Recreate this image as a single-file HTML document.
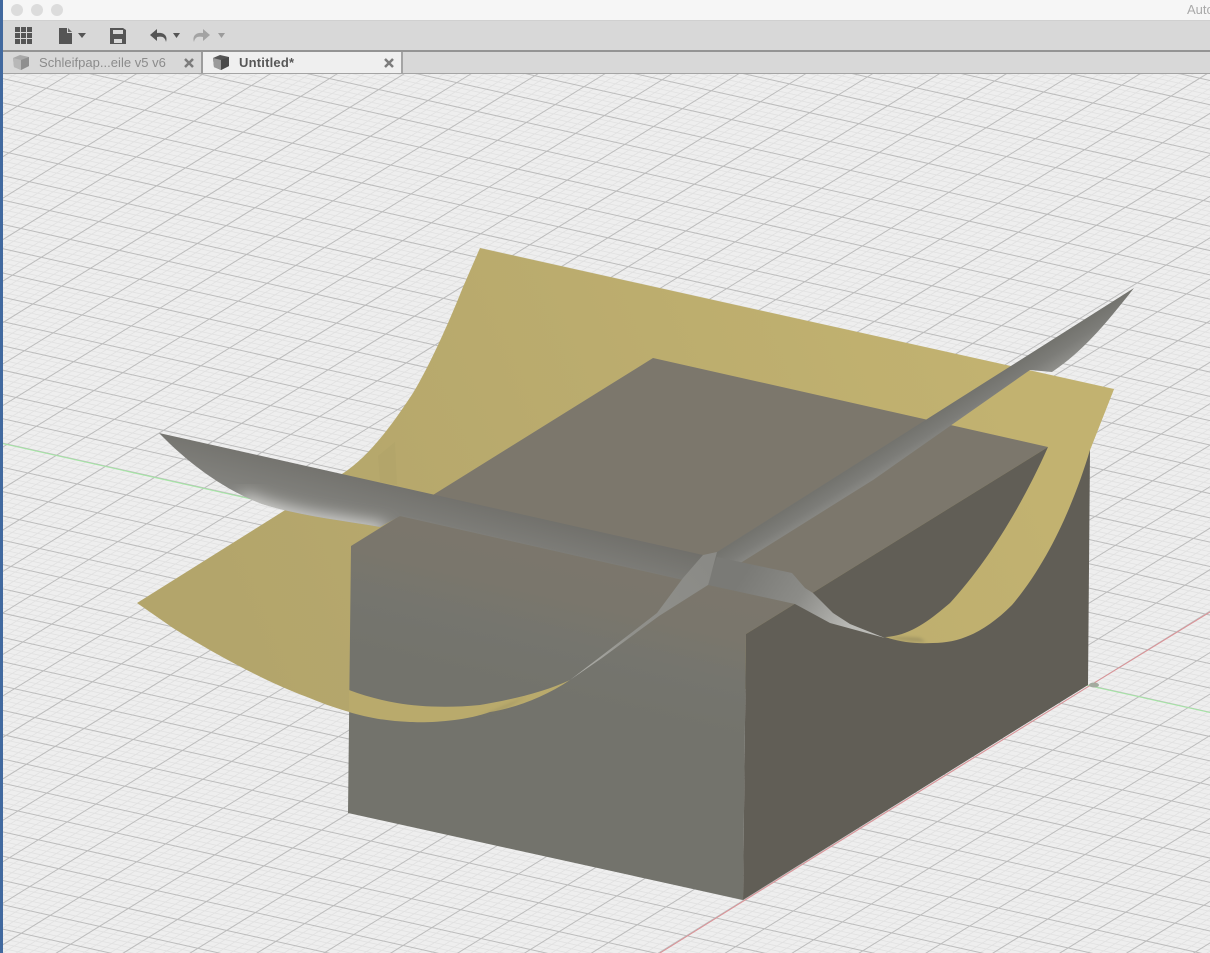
<!DOCTYPE html>
<html><head><meta charset="utf-8"><title>Autodesk Fusion 360</title>
<style>
html,body{margin:0;padding:0;background:#eeeeee;overflow:hidden;width:1210px;height:953px}
#w{position:absolute;left:0;top:0;width:1210px;height:953px;overflow:hidden;font-family:"Liberation Sans",sans-serif}
svg{position:absolute;left:0;top:0;display:block;overflow:hidden}
.t{position:absolute;font-size:13px;line-height:14px;white-space:nowrap}
</style></head><body><div id="w">
<svg width="1210" height="953" viewBox="0 0 1210 953">
<defs>
<path id="b" d="M-1000 219.5L2000 888.4"/>
<g id="b5"><use href="#b"/><use href="#b" y="24.3"/><use href="#b" y="48.6"/><use href="#b" y="72.9"/><use href="#b" y="97.2"/></g>
<g id="b25"><use href="#b5"/><use href="#b5" y="121.5"/><use href="#b5" y="243"/><use href="#b5" y="364.5"/><use href="#b5" y="486"/></g>
<g id="b50"><use href="#b25"/><use href="#b25" y="607.5"/></g>
<path id="a" d="M-410 1615.5L2090 65.5"/>
<g id="a5"><use href="#a"/><use href="#a" x="66.9"/><use href="#a" x="133.8"/><use href="#a" x="200.7"/><use href="#a" x="267.6"/></g>
<g id="a25"><use href="#a5"/><use href="#a5" x="334.5"/><use href="#a5" x="669"/><use href="#a5" x="1003.5"/><use href="#a5" x="1338"/></g>
<g id="a50"><use href="#a25"/><use href="#a25" x="1672.5"/></g>
<linearGradient id="y" gradientUnits="userSpaceOnUse" x1="250" y1="650" x2="1000" y2="350"><stop offset="0" stop-color="#b3a56b"/><stop offset="1" stop-color="#c2b270"/></linearGradient>
<linearGradient id="f" gradientUnits="userSpaceOnUse" x1="560" y1="520" x2="520" y2="690"><stop offset="0" stop-color="#7c776c"/><stop offset=".42" stop-color="#7a766c"/><stop offset=".68" stop-color="#75756e"/><stop offset="1" stop-color="#73736c"/></linearGradient>
<linearGradient id="b1" gradientUnits="userSpaceOnUse" x1="420" y1="480" x2="405" y2="540"><stop offset="0" stop-color="#6f6e69"/><stop offset="1" stop-color="#868682"/></linearGradient>
<linearGradient id="b2" gradientUnits="userSpaceOnUse" x1="930" y1="418" x2="944" y2="440"><stop offset="0" stop-color="#73736e"/><stop offset=".5" stop-color="#7c7c78"/><stop offset="1" stop-color="#8e8e8a"/></linearGradient>
<linearGradient id="b3" gradientUnits="userSpaceOnUse" x1="750" y1="565" x2="850" y2="630"><stop offset="0" stop-color="#7a7a76"/><stop offset=".5" stop-color="#8c8c88"/><stop offset="1" stop-color="#bbbbb7"/></linearGradient>
<linearGradient id="b4" gradientUnits="userSpaceOnUse" x1="710" y1="560" x2="575" y2="678"><stop offset="0" stop-color="#8a8a86"/><stop offset=".6" stop-color="#90908b"/><stop offset="1" stop-color="#b0b0ab"/></linearGradient>
<filter id="bl" x="-20%" y="-50%" width="140%" height="200%"><feGaussianBlur stdDeviation="8"/></filter>
<filter id="bs" x="-30%" y="-100%" width="160%" height="300%"><feGaussianBlur stdDeviation="1.500"/></filter>
<clipPath id="c1"><path d="M159 433L703 555 683 580 400 516 380 527C340 520 300 516 262 504 225 490 190 465 159 433Z"/></clipPath>
</defs>
<rect width="1210" height="953" fill="#eeeeee"/>
<g stroke="#e1e1e1" stroke-width=".8" fill="none">
<use href="#b50" y="-627.1"/><use href="#b50" y="-622.2"/><use href="#b50" y="-617.4"/><use href="#b50" y="-612.5"/>
<use href="#a50" x="-2060.6"/><use href="#a50" x="-2047.2"/><use href="#a50" x="-2033.8"/><use href="#a50" x="-2020.4"/>
</g>
<g stroke="#bcbcbc" stroke-width="1" fill="none">
<use href="#b50" y="-631.8"/>
<use href="#a50" x="-2073.9"/>
</g>
<path d="M0 443L1090 686 1210 712.500" stroke="#a4e6a4" stroke-width="1" fill="none"/>
<path d="M660 953L1090 685.500 1210 612" stroke="#dd9095" stroke-width="1" fill="none"/>
<ellipse cx="1094" cy="685" rx="5" ry="2.5" fill="#a3aa9f"/>

<path fill="url(#y)" d="M480 248L1114 389 1090 450C1075 500 1050 560 1012 605 985 632 960 643 933 643L700 700 490 712C465 721 430 723 410 722 380 721 345 713 307 697 260 680 200 645 173 628L137 603 290 507 345 472C365 458 385 436 413 393 430 365 450 320 463 287Z"/>
<path d="M378 456L395 442 397 485 380 482Z" fill="#ad9f66" opacity=".3"/>

<path fill="url(#f)" d="M653 358L1048 447 746 634 743 900 348 813 351 546Z"/>
<path fill="#615e56" d="M746 634L1048 447 1090 450 1088 685 743 900Z"/>
<path fill="url(#y)" d="M1048 447L1114 389 1090 450C1075 500 1050 560 1012 605 985 632 960 643 933 643 915 644 900 642 885 637 910 636 930 620 950 603 985 565 1020 510 1048 447Z"/>
<path fill="#b9aa6c" d="M349 690C365 696 380 700 397 703 420 707 450 708 480 705 510 700 545 692 570 680 545 697 515 708 490 712 465 721 430 723 410 722 385 721 365 717 349 712Z"/>
<path fill="#7f7857" d="M478 716C495 711 510 704 525 697 510 706 500 710 490 713Z" opacity=".6" filter="url(#bs)"/>
<path fill="#7f7857" d="M888 637C900 637 912 637 920 638L926 642C915 642 900 641 888 637Z" opacity=".45" filter="url(#bs)"/>

<path fill="url(#b2)" d="M1134 288C1105 325 1082 352 1052 372L1030 370 873 480 742 562 708 585 680 568 717 552Z"/>
<path fill="url(#b1)" d="M159 433L703 555 683 580 400 516 380 527C340 520 300 516 262 504 225 490 190 465 159 433Z"/>
<g clip-path="url(#c1)"><path d="M240 500C262 510 300 520 330 524 350 527 365 530 385 532" stroke="#e4e4e2" stroke-width="14" fill="none" filter="url(#bl)"/><path d="M400 520L683 585" stroke="#9a9a96" stroke-width="6" fill="none" filter="url(#bs)" opacity=".5"/></g>
<path fill="url(#b3)" d="M717 557L792 573 805 588 813 593 833 613 850 624 885 638 830 623 795 604 708 585Z"/>
<path fill="url(#b4)" d="M703 555L717 552 708 585 659 616 602 658 570 680 600 657 657 613 683 578Z"/>

<rect x="0" y="0" width="1210" height="20" fill="#f6f6f6"/>
<rect x="0" y="20" width="1210" height="1" fill="#d0d0d0"/>
<rect x="0" y="21" width="1210" height="29" fill="#d8d8d8"/>
<rect x="0" y="50" width="1210" height="2" fill="#949494"/>
<rect x="0" y="52" width="1210" height="21" fill="#d8d8d8"/>
<rect x="0" y="73" width="1210" height="1" fill="#a4a4a4"/>
<rect x="203" y="52" width="198" height="21" fill="#efefef"/>
<rect x="201" y="52" width="2" height="21" fill="#9c9c9c"/>
<rect x="401" y="52" width="2" height="21" fill="#a4a4a4"/>
<circle cx="17" cy="10" r="6" fill="#dcdcdc"/><circle cx="37" cy="10" r="6" fill="#dcdcdc"/><circle cx="57" cy="10" r="6" fill="#dcdcdc"/>

<g fill="#555555">
<rect x="15" y="27" width="5" height="5"/><rect x="21" y="27" width="5" height="5"/><rect x="27" y="27" width="5" height="5"/>
<rect x="15" y="33" width="5" height="5"/><rect x="21" y="33" width="5" height="5"/><rect x="27" y="33" width="5" height="5"/>
<rect x="15" y="39" width="5" height="5"/><rect x="21" y="39" width="5" height="5"/><rect x="27" y="39" width="5" height="5"/>
<path d="M59 28H67V33H72V44H59Z"/><path d="M68 28L72 32H68Z" fill="#6a6a6a"/>
<path d="M78 33H86L82 38Z"/>
<path fill-rule="evenodd" d="M110 28H123L126 30V44H110ZM113 30V34H123V30ZM114 39V43H122V39Z"/>
<path d="M157 29V33C164 32 168 36 166 42 165 37 162 36 157 37V41L150 35Z"/>
<path d="M173 33H180L176.500 38Z"/>
</g>
<path d="M203 29V33C196 32 192 36 194 42 195 37 198 36 203 37V41L210 35Z" fill="#a3a3a3"/>
<path d="M218 33H225L221.500 38Z" fill="#9b9b9b"/>

<path d="M13 58L20 55 29 57 29 66 21 70 14 67Z" fill="#a8a8a8"/><path d="M13 58L21 60 21 70 14 67Z" fill="#b8b8b8"/><path d="M21 60L29 57 29 66 21 70Z" fill="#8f8f8f"/>
<path d="M213 58L220 55 229 57 229 66 221 70 214 67Z" fill="#555"/><path d="M213 58L221 60 221 70 214 67Z" fill="#9a9a9a"/><path d="M221 60L229 57 229 66 221 70Z" fill="#4a4a4a"/>
<path d="M185 59L193 67M193 59L185 67" stroke="#7c7c7c" stroke-width="2.500" fill="none"/>
<path d="M385 59L393 67M393 59L385 67" stroke="#7c7c7c" stroke-width="2.500" fill="none"/>
<rect x="0" y="0" width="3" height="953" fill="#41699f"/>
</svg>
<div class="t" style="left:39px;top:56px;color:#8b8b8b;letter-spacing:.02px">Schleifpap...eile v5 v6</div>
<div class="t" style="left:239px;top:56px;color:#575757;font-weight:bold;letter-spacing:.2px">Untitled*</div>
<div class="t" style="left:1187px;top:3px;color:#a9a9a9">Auto</div>
</div></body></html>
